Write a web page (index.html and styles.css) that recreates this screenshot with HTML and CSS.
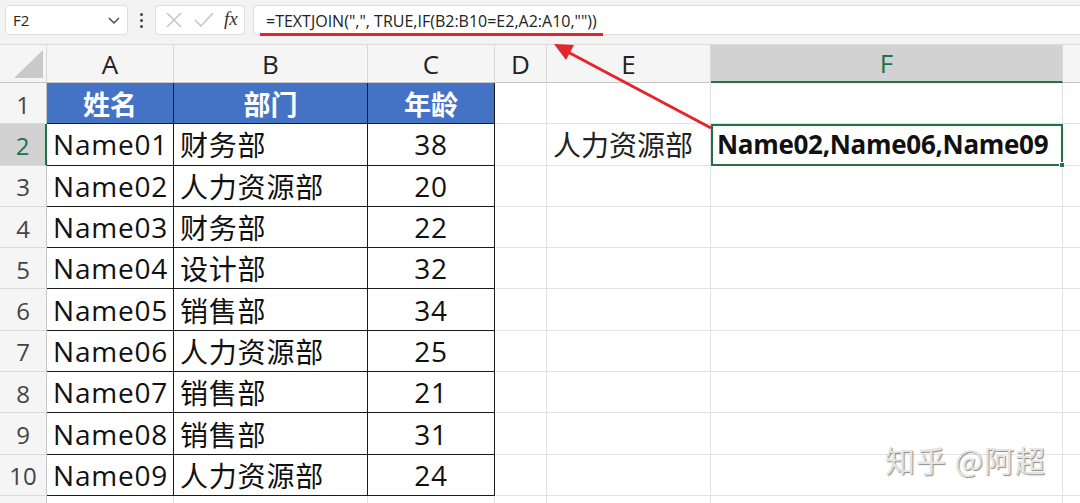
FILE: index.html
```html
<!DOCTYPE html>
<html lang="zh-CN">
<head>
  <meta charset="UTF-8">
  <title>TEXTJOIN</title>
  <link rel="stylesheet" href="styles.css">
</head>
<body>

<div class="toolbar">
  <div class="namebox">
    <span>F2</span>
    <svg class="chev" width="14" height="10" viewBox="0 0 14 10"><path d="M2 3 L7 8 L12 3" fill="none" stroke="#444" stroke-width="1.4"/></svg>
  </div>
  <div class="dots"><i></i><i></i><i></i></div>
  <div class="fxbox">
    <svg width="20" height="20" viewBox="0 0 20 20"><path d="M3 3 L17 17 M17 3 L3 17" stroke="#c4c4c4" stroke-width="1.5" fill="none"/></svg>
    <svg width="22" height="20" viewBox="0 0 22 20"><path d="M2 10 L8 16 L20 3" stroke="#c4c4c4" stroke-width="1.5" fill="none"/></svg>
    <span class="fx">fx</span>
  </div>
  <div class="formula">
    <span class="underline">=TEXTJOIN(",", TRUE,IF(B2:B10=E2,A2:A10,""))</span>
  </div>
</div>

<div class="sheet-wrap">
  <table class="sheet">
    <colgroup>
      <col style="width:47px">
      <col style="width:127px">
      <col style="width:194px">
      <col style="width:127px">
      <col style="width:52px">
      <col style="width:164px">
      <col style="width:352px">
      <col style="width:100px">
    </colgroup>
    <tr class="colhead">
      <th class="corner"><div class="tri"></div></th>
      <th>A</th><th>B</th><th>C</th><th>D</th><th>E</th><th class="sel-col">F</th><th></th>
    </tr>
    <tr>
      <th class="rowhead">1</th>
      <td class="hd">姓名</td><td class="hd">部门</td><td class="hd">年龄</td>
      <td></td><td></td><td></td><td></td>
    </tr>
    <tr>
      <th class="rowhead sel-row">2</th>
      <td class="t">Name01</td><td class="t">财务部</td><td class="t num">38</td>
      <td></td><td class="txt">人力资源部</td>
      <td class="active">Name02,Name06,Name09<span class="handle"></span></td><td></td>
    </tr>
    <tr>
      <th class="rowhead">3</th>
      <td class="t">Name02</td><td class="t">人力资源部</td><td class="t num">20</td>
      <td></td><td></td><td></td><td></td>
    </tr>
    <tr>
      <th class="rowhead">4</th>
      <td class="t">Name03</td><td class="t">财务部</td><td class="t num">22</td>
      <td></td><td></td><td></td><td></td>
    </tr>
    <tr>
      <th class="rowhead">5</th>
      <td class="t">Name04</td><td class="t">设计部</td><td class="t num">32</td>
      <td></td><td></td><td></td><td></td>
    </tr>
    <tr>
      <th class="rowhead">6</th>
      <td class="t">Name05</td><td class="t">销售部</td><td class="t num">34</td>
      <td></td><td></td><td></td><td></td>
    </tr>
    <tr>
      <th class="rowhead">7</th>
      <td class="t">Name06</td><td class="t">人力资源部</td><td class="t num">25</td>
      <td></td><td></td><td></td><td></td>
    </tr>
    <tr>
      <th class="rowhead">8</th>
      <td class="t">Name07</td><td class="t">销售部</td><td class="t num">21</td>
      <td></td><td></td><td></td><td></td>
    </tr>
    <tr>
      <th class="rowhead">9</th>
      <td class="t">Name08</td><td class="t">销售部</td><td class="t num">31</td>
      <td></td><td></td><td></td><td></td>
    </tr>
    <tr>
      <th class="rowhead">10</th>
      <td class="t">Name09</td><td class="t">人力资源部</td><td class="t num">24</td>
      <td></td><td></td><td></td><td></td>
    </tr>
    <tr>
      <th class="rowhead"></th>
      <td></td><td></td><td></td><td></td><td></td><td></td><td></td>
    </tr>
  </table>
</div>

<div class="watermark">知乎 @阿超</div>

<svg class="arrow" width="1080" height="503" viewBox="0 0 1080 503">
  <line x1="711" y1="128" x2="566" y2="51" stroke="#e3262b" stroke-width="3"/>
  <polygon points="554,44 566,60 574,45" fill="#e3262b"/>
</svg>

</body>
</html>
```

FILE: styles.css
```css
* {
  box-sizing: border-box;
}

body {
  margin: 0;
  width: 1080px;
  height: 503px;
  overflow: hidden;
  position: relative;
  background: #fff;
  font-family: 'Open Sans', 'Noto Sans CJK SC', sans-serif;
}

/* formula bar */
.toolbar {
  height: 45px;
  background: #f3f3f3;
  border-bottom: 1px solid #dcdcdc;
  display: flex;
  align-items: center;
  padding: 0 0 4px 5px;
}

.namebox {
  width: 123px;
  height: 30px;
  background: #fff;
  border: 1px solid #dedede;
  border-radius: 4px;
  display: flex;
  align-items: center;
  justify-content: space-between;
  padding: 0 6px 0 7px;
  font-size: 15px;
  color: #222;
}

.dots {
  width: 27px;
  display: flex;
  flex-direction: column;
  align-items: center;
  gap: 3px;
}

.dots i {
  width: 3px;
  height: 3px;
  background: #444;
  border-radius: 50%;
}

.fxbox {
  width: 90px;
  height: 30px;
  background: #fff;
  border: 1px solid #dedede;
  border-radius: 4px;
  display: flex;
  align-items: center;
  gap: 9px;
  padding-left: 8px;
}

.fx {
  font-family: 'Liberation Serif', serif;
  font-style: italic;
  font-size: 19px;
  color: #333;
  margin-top: -3px;
}

.formula {
  flex: 1;
  margin-left: 8px;
  height: 30px;
  background: #fff;
  border: 1px solid #dedede;
  border-right: none;
  border-radius: 4px 0 0 4px;
  padding-left: 6px;
  display: flex;
  align-items: center;
  font-size: 16px;
  color: #222;
}

.underline {
  padding: 2px 6px 1px;
  border-bottom: 3px solid #e3262b;
  margin-top: 4px;
}

/* grid */
.sheet-wrap {
  width: 1080px;
  overflow: hidden;
}

.sheet {
  table-layout: fixed;
  width: 1163px;
  border-collapse: separate;
  border-spacing: 0;
}

.sheet td, .sheet th {
  padding: 0;
  border-right: 1px solid #e2e2e2;
  border-bottom: 1px solid #e2e2e2;
  font-weight: normal;
  white-space: nowrap;
  overflow: visible;
}

.sheet tr {
  height: 41.3px;
}

.colhead {
  height: 37px !important;
}

.colhead th {
  background: #f5f5f5;
  font-size: 26px;
  color: #222;
  border-right: 1px solid #d9d9d9;
  border-bottom: 1px solid #c6c6c6;
  line-height: 36px;
}

.corner {
  position: relative;
}

.tri {
  position: absolute;
  right: 3px;
  bottom: 4px;
  width: 29px;
  height: 28px;
  background: #c9c9c9;
  clip-path: polygon(100% 0, 100% 100%, 0 100%);
}

.colhead .sel-col {
  background: #d2d2d2;
  color: #217346;
  border-bottom: 2px solid #217346;
}

.rowhead {
  background: #f5f5f5;
  color: #444;
  font-size: 24px;
  text-align: center;
  border-right: 1px solid #c6c6c6 !important;
  border-bottom: 1px solid #dcdcdc !important;
  padding-top: 2px !important;
}

.rowhead.sel-row {
  background: #d2d2d2;
  color: #217346;
  border-right: 2px solid #217346 !important;
}

.sheet .hd {
  background: #4472c4;
  color: #fff;
  font-weight: bold;
  font-size: 27px;
  text-align: center;
  border-right-color: #1a1a1a;
  border-bottom-color: #1a1a1a;
}

.sheet .t {
  font-size: 28px;
  letter-spacing: 0.8px;
  color: #111;
  padding-left: 6px;
  border-right-color: #1a1a1a;
  border-bottom-color: #1a1a1a;
}

.sheet .num {
  text-align: center;
  padding-left: 0;
}

.sheet .txt {
  font-size: 28px;
  color: #222;
  padding-left: 6px;
}

.sheet .active {
  position: relative;
  font-size: 26px;
  letter-spacing: -0.3px;
  font-weight: bold;
  color: #111;
  padding-left: 6px;
  outline: 2px solid #217346;
  outline-offset: -2px;
}

.handle {
  position: absolute;
  right: -3px;
  bottom: -3px;
  width: 6px;
  height: 6px;
  background: #217346;
  border: 1px solid #fff;
}

/* overlays */
.watermark {
  position: absolute;
  left: 885px;
  top: 437px;
  font-family: 'Noto Sans CJK SC', sans-serif;
  font-size: 30px;
  color: #e4e4e4;
  text-shadow: 1px 1px 1px #8c8c8c;
  letter-spacing: 1px;
}

.arrow {
  position: absolute;
  left: 0;
  top: 0;
  pointer-events: none;
}
```
